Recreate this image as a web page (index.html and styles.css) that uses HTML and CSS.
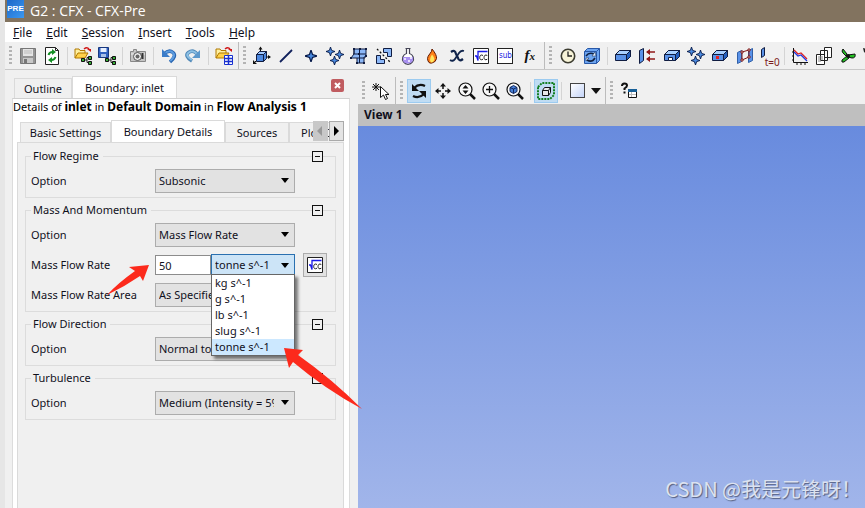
FILE: index.html
```html
<!DOCTYPE html>
<html lang="en">
<head>
	<meta charset="UTF-8">
	<title>G2 : CFX - CFX-Pre</title>
	<link rel="stylesheet" href="styles.css">
</head>
<body>
	<!-- shared shapes -->
	<svg class="defs" aria-hidden="true">
		<symbol id="i-folder" viewBox="0 0 20 20">
			<path d="M2 12V3h4l1 1.500h5V7" fill="#fff0a0" stroke="#b07800"/>
			<path d="M2 12l3-5h10l-3 5z" fill="#ffd24a" stroke="#b07800"/>
			<path d="M11 3q3-2.500 5 0" fill="none" stroke="#d01818" stroke-width="1.500"/>
			<path d="M14 3h4v3z" fill="#d01818"/>
		</symbol>
		<symbol id="i-tree" viewBox="0 0 20 20">
			<path d="M11 14h3M14 11.500v5M14 11.500h2M14 16.500h2" stroke="#222" fill="none"/>
			<path d="M8.500 12.500h3v3h-3zM15.500 10.500h3v3h-3zM15.500 15.500h3v3h-3z" fill="#35b035" stroke="#111"/>
		</symbol>
		<symbol id="i-star" viewBox="0 0 8 8">
			<path d="M4 0L5 3L8 4L5 5L4 8L3 5L0 4L3 3z" fill="#4a8ae0" stroke="#061848" stroke-width=".8"/>
		</symbol>
		<symbol id="i-box" viewBox="0 0 20 20">
			<path d="M2.500 8.500l4-4h11v6l-4 4h-11z" fill="#5a92e8" stroke="#101c40"/>
			<path d="M2.500 8.500l4-4h11l-4 4z" fill="#a8d0ff" stroke="#101c40"/>
			<path d="M13.500 8.500v6l4-4v-6z" fill="#2460c0" stroke="#101c40"/>
		</symbol>
		<symbol id="i-lens" viewBox="0 0 20 20">
			<path d="M13 13l5 5" stroke="#111" stroke-width="2.500"/>
			<circle cx="8.500" cy="8.500" r="6.500" fill="#f8f8f8" stroke="#111" stroke-width="1.200"/>
		</symbol>
		<symbol id="i-cc" viewBox="0 0 20 20">
			<path d="M2.500 2.500h15v15h-15z" fill="#fff" stroke="#222"/>
			<path d="M4 10h1.500l1.500 4.500V5.500h9.500" fill="none" stroke="#1818e8" stroke-width="1.300"/>
			<path d="M12 9.500c-2-1.200-3.300 0-3.300 2s1.300 3 3.300 1.700M16.300 9.500c-2-1.200-3.300 0-3.300 2s1.300 3 3.300 1.700" fill="none" stroke="#222"/>
		</symbol>
	</svg>

	<div class="app">
		<header class="titlebar">
			<span class="logo">PRE</span>
			<span class="title">G2 : CFX - CFX-Pre</span>
		</header>

		<nav class="menubar">
			<button><u>F</u>ile</button>
			<button><u>E</u>dit</button>
			<button><u>S</u>ession</button>
			<button><u>I</u>nsert</button>
			<button><u>T</u>ools</button>
			<button><u>H</u>elp</button>
		</nav>

		<div class="toolbar main-tools">
			<i class="grip"></i>
			<div class="seg">
				<button aria-label="Save"><svg viewBox="0 0 20 20"><path d="M2.500 2.500h15v15h-15z" fill="#949494" stroke="#777"/><path d="M5 3h10v7H5z" fill="#e4e4e4"/><path d="M5 12h10v5H5z" fill="#c8c8c8"/><path d="M6 5h8M6 7h8" stroke="#bbb"/><path d="M6 13h3v4H6z" fill="#777"/></svg></button>
				<button aria-label="Refresh"><svg viewBox="0 0 20 20"><path d="M3.500 1.500h10l3 3v14h-13z" fill="#fff" stroke="#222"/><path d="M13.500 1.500v3h3" fill="none" stroke="#222"/><path d="M6.500 9q1-3 4-3M13.500 11q-1 3-4 3" fill="none" stroke="#149024" stroke-width="2"/><path d="M10 3l4 3-4 3zM10 11l-4 3 4 3z" fill="#149024"/></svg></button>
			</div>
			<i class="sep"></i>
			<div class="seg">
				<button aria-label="Open case"><svg viewBox="0 0 20 20"><use href="#i-folder"/><use href="#i-tree"/></svg></button>
				<button aria-label="Save case"><svg viewBox="0 0 20 20"><path d="M1.500 1.500h10v10h-10z" fill="#3060c0" stroke="#183880"/><path d="M3.500 2h6v4h-6z" fill="#e8f0ff"/><path d="M4 8h5v3H4z" fill="#a8c0e8"/><use href="#i-tree"/></svg></button>
			</div>
			<i class="sep"></i>
			<div class="seg">
				<button aria-label="Snapshot"><svg viewBox="0 0 20 20"><path d="M2.500 5.500h3v-2h3v2h9v10h-15z" fill="#c4c4c4" stroke="#888"/><path d="M3 8h14" stroke="#eee"/><circle cx="9.500" cy="10.500" r="4" fill="#eee" stroke="#555"/><circle cx="9.500" cy="10.500" r="2" fill="#666"/><path d="M14.500 7v6" stroke="#333" stroke-width="2"/></svg></button>
			</div>
			<i class="sep"></i>
			<div class="seg">
				<button aria-label="Undo"><svg viewBox="0 0 20 20"><path d="M5 8q5-5 9-1.500t-3 9.500" fill="none" stroke="#2864b0" stroke-width="3.500"/><path d="M5 8q5-4.500 8.700-1.500t-2.500 8.500" fill="none" stroke="#5c9ce0" stroke-width="2"/><path d="M3 3v8h8z" fill="#3c7cc8"/></svg></button>
				<button aria-label="Redo"><svg viewBox="0 0 20 20"><path d="M14 8q-4-5-8.500-1.500t3.500 8.500" fill="none" stroke="#5088b8" stroke-width="3.500"/><path d="M14 8q-4-4.500-8.200-1.500t3 7.500" fill="none" stroke="#8cc0e4" stroke-width="2"/><path d="M17 4v8H9z" fill="#5c98cc"/></svg></button>
			</div>
			<i class="sep"></i>
			<div class="seg">
				<button aria-label="Import mesh"><svg viewBox="0 0 20 20"><use href="#i-folder"/><path d="M10.500 9.500h8v9h-8z" fill="#fff" stroke="#1830d0"/><path d="M14.500 10v9M11 12.500h8M11 15.500h8" stroke="#1830d0" stroke-width="1.500"/></svg></button>
			</div>
			<i class="sep end"></i>

			<i class="grip"></i>
			<div class="seg seg-insert">
				<button aria-label="Domain"><svg viewBox="0 0 20 20"><path d="M8.500 8V2M12 11h6M5 14l-4 4" stroke="#111"/><path d="M6.500 3.500l2-3 2 3zM16 9l3 2-3 2zM1 14v4h4z" fill="#111"/><path d="M4.500 8.500l3-3h7v7l-3 3h-7z" fill="#4c88e0" stroke="#101c40"/><path d="M4.500 8.500l3-3h7l-3 3z" fill="#a0c8ff" stroke="#101c40"/><path d="M11.500 8.500v7" stroke="#101c40"/></svg></button>
				<button aria-label="Line"><svg viewBox="0 0 20 20"><path d="M4 16L16 4" stroke="#10205c" stroke-width="1.800"/></svg></button>
				<button aria-label="Point"><svg viewBox="0 0 20 20"><use href="#i-star" x="4" y="4" width="12" height="12"/></svg></button>
				<button aria-label="Point cloud"><svg viewBox="0 0 20 20"><use href="#i-star" x="1" y="1" width="9" height="9"/><use href="#i-star" x="10" y="4" width="9" height="9"/><use href="#i-star" x="5" y="10" width="9" height="9"/></svg></button>
				<button aria-label="Subdomain"><svg viewBox="0 0 20 20"><path d="M5 3h12v8h-2v6H8v-5H2l3-4z" fill="#8cb8f8" stroke="#101c40"/><path d="M10.500 3v14M4 8h13M8 12h8M5 3v5" stroke="#101c40" fill="none"/><path d="M4 2h2v2H4zM10 2h2v2h-2zM16 2h2v2h-2zM1 11h2v2H1zM7 16h2v2H7zM14 16h2v2h-2zM16 9h2v2h-2zM9 7h2v2H9z" fill="#101c40"/></svg></button>
				<button aria-label="Interface"><svg viewBox="0 0 20 20"><path d="M9.500 2.500h8v8h-4v-4h-4z" fill="#8cb8f8" stroke="#101c40"/><path d="M2.500 9.500h4v4h4v4h-8z" fill="#8cb8f8" stroke="#101c40"/><path d="M3 3l14 14" stroke="#111" stroke-dasharray="2 2" stroke-width="1.300"/></svg></button>
				<button aria-label="Material"><svg viewBox="0 0 20 20"><path d="M7.500 2.500h5M8.500 3v4.500a5.500 5.500 0 1 0 3 0V3" fill="#fff" stroke="#445" stroke-width="1.200"/><path d="M5 11h10q1 6-5 6.500T5 11z" fill="#a890f0"/><path d="M6 12h2v2H6zM10 14h2v2h-2zM12 11h2v2h-2z" fill="#e8e0ff"/></svg></button>
				<button aria-label="Reaction"><svg viewBox="0 0 20 20"><path d="M10 3q5 6 4.500 9.500T10 17 5.500 12.500q0-2 2.500-5 2-2 2-4.500z" fill="#ff8018" stroke="#601800"/><path d="M10 8.500q3 3.500 2.200 5.500T10 16.500 8 14q0-2.500 2-5.500z" fill="#ffe860"/></svg></button>
				<button aria-label="Variable"><svg viewBox="0 0 20 20"><path d="M4 6q4-3 5 2l2 4q1 4 5 1" fill="none" stroke="#10244c" stroke-width="2.200"/><path d="M17 5q-3-1-5 2l-4 6q-2 3-5 1" fill="none" stroke="#10244c" stroke-width="1.800"/></svg></button>
				<button aria-label="Expression"><svg viewBox="0 0 20 20"><use href="#i-cc"/></svg></button>
				<button aria-label="Subroutine"><span class="subicon">sub</span></button>
				<button aria-label="Function"><span class="fxicon">f<small>x</small></span></button>
			</div>
			<i class="sep end"></i>

			<i class="grip"></i>
			<div class="seg seg-time">
				<button aria-label="Analysis type"><svg viewBox="0 0 20 20"><circle cx="10" cy="10" r="6.700" fill="#f8f4d8" stroke="#3c3c30" stroke-width="1.600"/><path d="M10 5.500V10h4" fill="none" stroke="#222" stroke-width="1.300"/></svg></button>
				<button aria-label="Domain motion"><svg viewBox="0 0 20 20"><path d="M2.500 5.500l3-3h12v12l-3 3h-12z" fill="#6ca4f0" stroke="#2858a8"/><path d="M2.500 5.500h12v12M14.500 5.500l3-3" fill="none" stroke="#2858a8"/><path d="M4 10q3-4 8-2M13 12q-3 5-8 2" fill="none" stroke="#102040" stroke-width="1.500"/><path d="M10 10l4 0-1-4zM7 12l-3 0 0 3z" fill="#e8f4ff" stroke="#102040" stroke-width=".5"/></svg></button>
			</div>
			<i class="sep"></i>
			<div class="seg seg-physics">
				<button aria-label="New domain"><svg viewBox="0 0 20 20"><use href="#i-box"/></svg></button>
				<button aria-label="Boundary"><svg viewBox="0 0 20 20"><path d="M2.500 4.500l4-2v12l-4 3z" fill="#5a92e8" stroke="#101c40"/><path d="M10 6h8M10 13h8" stroke="#901818" stroke-width="1.500"/><path d="M9 6l4-3v6zM9 13l4-3v6z" fill="#901818"/></svg></button>
				<button aria-label="Porous domain"><svg viewBox="0 0 20 20"><use href="#i-box"/><path d="M6.500 14.500v-3h4v3z" fill="#fff" stroke="#101c40"/></svg></button>
				<button aria-label="Source points"><svg viewBox="0 0 20 20"><use href="#i-star" x="1" y="1" width="9" height="9"/><use href="#i-star" x="10" y="4" width="9" height="9"/><use href="#i-star" x="5" y="10" width="9" height="9"/></svg></button>
				<button aria-label="Source"><svg viewBox="0 0 20 20"><use href="#i-box"/><path d="M6 10h3v3H6z" fill="#e82020"/></svg></button>
				<button aria-label="Domain interface"><svg viewBox="0 0 20 20"><path d="M2.500 6.500l4-2v11l-4 2zM13.500 4.500l4-2v12l-4 2z" fill="#5a92e8" stroke="#3060a8"/><path d="M7 6l7-2M7 14l7-3M7 6v8M14 4v7" fill="none" stroke="#801818"/><path d="M6 5h2v2H6zM13 3h2v2h-2zM6 13h2v2H6zM13 10h2v2h-2z" fill="#fff" stroke="#801818"/></svg></button>
				<button aria-label="Initialisation"><svg viewBox="0 0 20 20"><path d="M2.500 3.500l3-2v8l-3 2z" fill="#5a92e8" stroke="#101c40"/></svg><span class="t0">t=0</span></button>
			</div>
			<i class="sep"></i>
			<div class="seg seg-solver">
				<button aria-label="Solver control"><svg viewBox="0 0 20 20"><path d="M3.500 2v14.500H18" fill="none" stroke="#111"/><path d="M2 6h2M2 10h2M2 14h2M7 17v2M11 17v2M15 17v2" stroke="#111"/><path d="M4 4l4 4 3-1 6 6" fill="none" stroke="#e02020" stroke-width="1.300"/><path d="M4 6l4 4 3-1 6 6" fill="none" stroke="#2038e0" stroke-width="1.300"/></svg></button>
				<button aria-label="Output control"><svg viewBox="0 0 20 20"><path d="M10.500 1.500h7v10h-7zM6.500 4.500h7v10h-7zM2.500 8.500h8v10h-8z" fill="#fff" stroke="#222"/><path d="M4 11h5M4 13h5M4 15h3" stroke="#888"/></svg></button>
				<button aria-label="Monitor"><svg viewBox="0 0 20 20"><path d="M9 8L5 3Q3 5 5 7l3 3zM10 9l7-1q1 4-3 4l-4-1zM9 10l-5 4q-1 3 2 2l5-4z" fill="#22c022" stroke="#111"/><circle cx="10" cy="10" r="2" fill="#111"/></svg></button>
				<button aria-label="Execution"><svg viewBox="0 0 20 20"><path d="M1 2l7 2v6L2 6z" fill="#222"/></svg></button>
			</div>
		</div>

		<main class="work">
			<section class="dock">
				<div class="docktabs">
					<button class="tab">Outline</button>
					<button class="tab on">Boundary: inlet</button>
					<button class="close" aria-label="Close"><svg viewBox="0 0 13 13"><path d="M4 4l5 5M9 4l-5 5" stroke="#fff" stroke-width="2"/></svg></button>
				</div>
				<div class="pane">
					<p class="details">Details of <b>inlet</b> in <b>Default Domain</b> in <b>Flow Analysis 1</b></p>
					<div class="subtabs">
						<button class="tab tab-basic">Basic Settings</button>
						<button class="tab tab-details on">Boundary Details</button>
						<button class="tab tab-sources">Sources</button>
						<button class="tab tab-plot">Plot Options</button>
						<div class="scroller">
							<button class="prev" aria-label="Previous tab" disabled></button>
							<button class="next" aria-label="Next tab"></button>
						</div>
					</div>
					<form class="form">
						<fieldset>
							<legend>Flow Regime</legend>
							<button type="button" class="fold" aria-label="Collapse Flow Regime"></button>
							<div class="row">
								<label for="regime">Option</label>
								<span class="combo"><select id="regime"><option>Subsonic</option></select></span>
							</div>
						</fieldset>
						<fieldset>
							<legend>Mass And Momentum</legend>
							<button type="button" class="fold" aria-label="Collapse Mass And Momentum"></button>
							<div class="row">
								<label for="momentum">Option</label>
								<span class="combo"><select id="momentum"><option>Mass Flow Rate</option></select></span>
							</div>
							<div class="row">
								<label for="rate">Mass Flow Rate</label>
								<div class="quantity">
									<input id="rate" type="text" value="50">
									<span class="combo unit"><select aria-label="Unit"><option>tonne s^-1</option></select></span>
									<ul class="unitlist">
										<li>kg s^-1</li>
										<li>g s^-1</li>
										<li>lb s^-1</li>
										<li>slug s^-1</li>
										<li class="on">tonne s^-1</li>
									</ul>
								</div>
								<button type="button" class="expr" aria-label="Enter expression"><svg viewBox="0 0 20 20"><use href="#i-cc"/></svg></button>
							</div>
							<div class="row">
								<label for="area">Mass Flow Rate Area</label>
								<span class="combo"><select id="area"><option>As Specified</option></select></span>
							</div>
						</fieldset>
						<fieldset>
							<legend>Flow Direction</legend>
							<button type="button" class="fold" aria-label="Collapse Flow Direction"></button>
							<div class="row">
								<label for="direction">Option</label>
								<span class="combo"><select id="direction"><option>Normal to Boundary</option></select></span>
							</div>
						</fieldset>
						<fieldset>
							<legend>Turbulence</legend>
							<button type="button" class="fold" aria-label="Collapse Turbulence"></button>
							<div class="row">
								<label for="turbulence">Option</label>
								<span class="combo"><select id="turbulence"><option>Medium (Intensity = 5%)</option></select></span>
							</div>
						</fieldset>
					</form>
				</div>
			</section>

			<section class="viewer">
				<div class="toolbar view-tools">
					<i class="grip"></i>
					<div class="seg">
						<button aria-label="Select"><svg viewBox="0 0 20 20"><path d="M5 2v8M1 6h8M2 3l6 6M8 3L2 9" stroke="#111"/><path d="M9.500 5.500v11l3-2.500 2 4.500 2-1-2-4h3.500z" fill="#fff" stroke="#111"/></svg></button>
					</div>
					<i class="sep end"></i>
					<i class="grip"></i>
					<div class="seg">
						<button class="on" aria-label="Rotate"><svg viewBox="0 0 20 20"><path d="M5 7q5-5 11-2M15 13q-5 5-11 2" fill="none" stroke="#111" stroke-width="2.300"/><path d="M3 3v7h7zM17 17v-7h-7z" fill="#111"/></svg></button>
						<button aria-label="Pan"><svg viewBox="0 0 20 20"><path d="M10 4v4M10 12v4M4 10h4M12 10h4" stroke="#111" stroke-width="1.500"/><path d="M10 2l3 3.500H7zM10 18l3-3.500H7zM2 10l3.500-3v6zM18 10l-3.500-3v6z" fill="#111"/></svg></button>
						<button aria-label="Zoom"><svg viewBox="0 0 20 20"><use href="#i-lens"/><path d="M8.500 4l3 3.500h-6zM8.500 13l3-3.500h-6z" fill="#111"/></svg></button>
						<button aria-label="Zoom box"><svg viewBox="0 0 20 20"><use href="#i-lens"/><path d="M8.500 5v7M5 8.500h7" stroke="#111" stroke-width="1.300"/></svg></button>
						<button aria-label="Fit view"><svg viewBox="0 0 20 20"><use href="#i-lens"/><path d="M5 6.500l3.500-2 3.500 2v4l-3.500 2-3.500-2z" fill="#4880d8" stroke="#102860"/><path d="M5 6.500l3.500 1.500 3.500-1.500M8.500 8v4.500" fill="none" stroke="#102860"/></svg></button>
					</div>
					<i class="sep"></i>
					<div class="seg">
						<button class="on" aria-label="Highlight"><svg viewBox="0 0 20 20"><path d="M2 6l4-4h12v12l-4 4H2z" fill="none" stroke="#128020" stroke-width="2" stroke-dasharray="2 1"/><path d="M6.500 9.500l2-3h6v5l-2 3h-6z" fill="#e8e8e8" stroke="#111"/><path d="M6.500 9.500h6v5M12.500 9.500l2-3" fill="none" stroke="#111"/></svg></button>
					</div>
					<i class="sep"></i>
					<div class="seg seg-swatch">
						<button aria-label="Background"><i class="swatch"></i></button>
						<button class="drop" aria-label="Background menu"><i class="caret"></i></button>
					</div>
					<i class="sep end"></i>
					<i class="grip"></i>
					<div class="seg">
						<button aria-label="Help"><svg viewBox="0 0 20 20"><path d="M3 5q0-2.500 2.500-2.500T8 4.500q0 1.500-2.500 3v1.500M5.500 10.500v2" fill="none" stroke="#111" stroke-width="2"/><path d="M9.500 8.500h8v8h-8z" fill="#fff" stroke="#111"/><path d="M9 8h9v3H9z" fill="#186098"/><path d="M10 13.500h7M12.500 11v5" stroke="#bbb"/></svg></button>
					</div>
				</div>
				<button class="viewname">View 1 <i class="caret"></i></button>
				<div class="canvas">
					<p class="credit">CSDN @我是元锋呀！</p>
				</div>
			</section>
		</main>

		<!-- pointers to the value and the unit -->
		<svg class="pointers" width="865" height="508" aria-hidden="true">
			<path d="M149 265L129 267L135 271Q118 283 107 295Q124 287 140 276L143 281z"/>
			<path d="M284 348L303 350L298 355Q332 379 362 409Q325 389 293 362L289 368z"/>
		</svg>
	</div>
</body>
</html>
```

FILE: styles.css
```css
html,body,ul,p,fieldset{margin:0px;padding:0px;}
*{
	box-sizing: border-box;
}
ul{
	list-style: none;
}
body{
	background-color: #e6e6e6;
	font-family: "Noto Sans", "DejaVu Sans Condensed", sans-serif;
	font-size: 11px;
	line-height: 16px;
	color: #10101c;
	overflow: hidden;
}
button,input,select{
	font: inherit;
	color: inherit;
	margin: 0;
	padding: 0;
	border: 0;
	border-radius: 0;
	background: none;
}
.defs{
	display: none;
}
.app{
	position: relative;
	display: flex;
	flex-direction: column;
	height: 100vh;
	padding-left: 5px;
}

/* title and menu */
.titlebar{
	display: flex;
	align-items: center;
	flex: none;
	gap: 6px;
	height: 22px;
	padding-left: 2px;
	background-color: #82735f;
	color: #fff;
}
.logo{
	width: 17px;
	height: 18px;
	margin-bottom: 4px;
	background: linear-gradient(135deg,#1c68c8,#3c98f0);
	font: bold 8px/18px "Liberation Sans", sans-serif;
	text-align: center;
}
.title{
	font: 14px/20px "Open Sans", "Noto Sans", sans-serif;
}
.menubar{
	display: flex;
	flex: none;
	gap: 14px;
	height: 20px;
	padding-left: 8px;
	background-color: #fff;
	font-size: 12px;
}
.menubar button{
	height: 22px;
}

/* toolbars */
.toolbar{
	display: flex;
	align-items: center;
	flex: none;
	background-color: #f0f0f0;
	overflow: hidden;
}
.main-tools{
	height: 28px;
	border-bottom: 1px solid #c8c8c8;
}
.view-tools{
	height: 27px;
}
.grip{
	flex: none;
	width: 3px;
	height: 20px;
	margin: 0 4px;
	background: repeating-linear-gradient(#b4b4b4 0 2px,transparent 2px 4px);
}
.sep{
	flex: none;
	width: 1px;
	height: 18px;
	margin: 0 3px;
	background-color: #d4d4d4;
}
.sep.end{
	height: 28px;
	margin: 0 0 0 2px;
	background-color: #bcbcbc;
}
.seg{
	display: flex;
	flex: none;
}
.toolbar button{
	position: relative;
	flex: 1 0 24px;
	display: flex;
	align-items: center;
	justify-content: center;
	height: 24px;
}
.toolbar svg{
	width: 20px;
	height: 20px;
}
.seg-insert{
	width: 292px;
}
.seg-time{
	width: 48px;
}
.seg-physics{
	width: 170px;
}
.view-tools button.on{
	background-color: #c0dcf3;
	border: 1px solid #9ccbf0;
}
.subicon{
	width: 16px;
	height: 16px;
	border: 1px solid #222;
	background-color: #fff;
	color: #2020e0;
	font: 8px/13px "DejaVu Sans Condensed", sans-serif;
}
.fxicon{
	font: italic bold 15px/18px "Liberation Serif", serif;
	color: #111;
}
.fxicon small{
	font-size: 11px;
}
.t0{
	position: absolute;
	left: 8px;
	bottom: 0;
	color: #7c1c1c;
	font-size: 10px;
	line-height: 12px;
}
.swatch{
	width: 15px;
	height: 15px;
	border: 1px solid #444;
	background: linear-gradient(135deg,#fff,#c4d4f8);
}
.toolbar .drop{
	flex: 0 0 14px;
}
.caret{
	display: inline-block;
	border: 5px solid transparent;
	border-top: 6px solid #111;
	border-bottom: 0;
}

/* docked editor */
.work{
	display: flex;
	flex: 1;
	min-height: 0;
	background-color: #f0f0f0;
	padding-top: 7px;
}
.dock{
	display: flex;
	flex-direction: column;
	flex: none;
	width: 338px;
	margin: 0 8px 0 7px;
}
.docktabs{
	display: flex;
	align-items: flex-end;
	height: 21px;
	padding: 0 6px 0 2px;
}
.tab{
	height: 20px;
	padding: 0 9px;
	border: 1px solid #dadada;
	border-bottom: 0;
	background-color: #f0f0f0;
	white-space: nowrap;
}
.tab.on{
	height: 22px;
	background-color: #fff;
}
.docktabs .tab.on{
	padding: 0 12px;
}
.close{
	width: 13px;
	height: 13px;
	margin: 0 0 6px auto;
	border-radius: 2px;
	background-color: #c05c60;
}
.close svg{
	display: block;
}
.pane{
	display: flex;
	flex-direction: column;
	flex: 1;
	padding: 0 5px 0 4px;
	border: 1px solid #dcdcdc;
	border-top-color: #d0d0d0;
	border-bottom: 0;
	background-color: #fff;
}
.details{
	height: 21px;
	margin-left: -4px;
	color: #000;
	white-space: nowrap;
}
.details b{
	font-size: 12px;
}
.subtabs{
	position: relative;
	display: flex;
	align-items: flex-end;
	height: 22px;
	padding-left: 3px;
	overflow: hidden;
}
.subtabs .tab{
	flex: none;
	text-align: center;
	padding: 0;
}
.tab-basic{
	width: 91px;
}
.tab-details{
	width: 114px;
}
.tab-sources{
	width: 64px;
}
.tab-plot{
	width: 88px;
}
.scroller{
	position: absolute;
	right: 0;
	top: 1px;
	display: flex;
	gap: 1px;
}
.scroller button{
	width: 15px;
	height: 20px;
	padding-left: 4px;
	background-color: #c8c8c8;
}
.scroller .next{
	border: 1px solid #aaa;
	background-color: #e4e4e4;
}
.scroller button::before{
	content: "";
	display: block;
	width: 0;
	border: 5px solid transparent;
}
.scroller .prev::before{
	border-right-color: #999;
	border-left: 0;
}
.scroller .next::before{
	border-left-color: #000;
	border-right: 0;
}
.form{
	display: flex;
	flex-direction: column;
	flex: 1;
	gap: 3px;
	padding: 4px 7px 0;
	border: 1px solid #dadada;
	border-bottom: 0;
	background-color: #f0f0f0;
}
fieldset{
	position: relative;
	min-width: 0;
	padding: 4px 5px;
	border: 1px solid #dcdcdc;
}
legend{
	height: 18px;
	padding: 0 4px 0 2px;
	line-height: 18px;
}
.fold{
	position: absolute;
	right: 12px;
	top: -14px;
	width: 11px;
	height: 11px;
	border: 1px solid #111;
	background: linear-gradient(#111,#111) center / 5px 1px no-repeat #f0f0f0;
}
.row{
	display: grid;
	grid-template-columns: 124px 140px 24px;
	align-items: center;
	height: 24px;
}
.row + .row{
	margin-top: 6px;
}
.combo{
	position: relative;
	display: block;
	height: 24px;
}
.combo select{
	appearance: none;
	width: 100%;
	height: 100%;
	padding: 0 20px 0 3px;
	border: 1px solid #acacac;
	background-color: #e2e2e2;
}
.combo::after{
	content: "";
	position: absolute;
	right: 6px;
	top: 9px;
	border: 4px solid transparent;
	border-top: 5px solid #000;
	border-bottom: 0;
	pointer-events: none;
}
.quantity{
	position: relative;
	display: flex;
	align-items: center;
	height: 22px;
}
.quantity input{
	width: 56px;
	height: 20px;
	padding: 0 3px;
	border: 1px solid #8c8c8c;
	background-color: #fff;
}
.unit{
	flex: 1;
	height: 22px;
}
.unit select{
	border-color: #2a70b0;
	background-color: #cce4f7;
}
.unitlist{
	position: absolute;
	z-index: 2;
	left: 56px;
	right: 0;
	top: 20px;
	border: 1px solid #666;
	background-color: #fff;
	box-shadow: 3px 3px 3px rgba(0,0,0,.5);
}
.unitlist li{
	height: 16px;
	padding-left: 3px;
}
.unitlist .on{
	background-color: #cce8ff;
}
.expr{
	width: 24px;
	height: 24px;
	margin-left: 8px;
	border: 1px solid #acacac;
	background-color: #e2e2e2;
}
.expr svg{
	display: block;
	width: 20px;
	height: 20px;
	margin: auto;
}

/* 3D view */
.viewer{
	display: flex;
	flex-direction: column;
	flex: 1;
	min-width: 0;
}
.viewname{
	display: flex;
	align-items: center;
	flex: none;
	gap: 9px;
	height: 22px;
	padding-left: 6px;
	background-color: #bfbfbf;
	font-size: 12px;
	font-weight: bold;
}
.canvas{
	display: flex;
	align-items: flex-end;
	justify-content: flex-end;
	flex: 1;
	padding: 0 4px 5px;
	background: linear-gradient(#688bde,#a1b5ea);
}
.credit{
	color: #dce2f0;
	font: 20px/28px "Noto Sans CJK SC", sans-serif;
	text-shadow: 1px 1px 1px #555f80;
	white-space: nowrap;
}
.pointers{
	position: absolute;
	z-index: 3;
	left: 0;
	top: 0;
	fill: #fc2a1c;
	pointer-events: none;
}
```
